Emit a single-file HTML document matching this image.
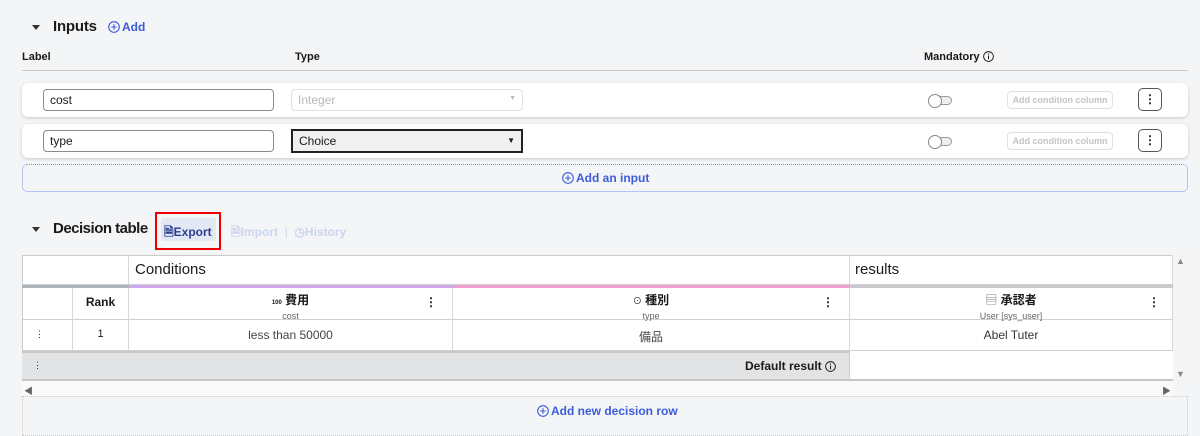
<!DOCTYPE html>
<html><head><meta charset="utf-8"><style>
*{box-sizing:border-box;margin:0;padding:0}
body{width:1200px;height:422px;background:#f4f5f7;font-family:"Liberation Sans","Noto Sans CJK JP",sans-serif;color:#1a1a1a;position:relative;overflow:hidden;font-size:12px}
.a{position:absolute}
.tri{width:0;height:0;border-left:4px solid transparent;border-right:4px solid transparent;border-top:5px solid #333}
.h{font-weight:bold;font-size:15px;letter-spacing:-0.2px}
.blue{color:#3b5bdb;font-weight:bold;font-size:12px;white-space:nowrap}
.card{background:#fff;border-radius:6px;box-shadow:0 1px 3px rgba(0,0,0,.18);left:22px;width:1166px;height:34px}
.inp{border:1px solid #8a8a8a;border-radius:4px;background:#fff;height:22px;padding:3px 6px;font-size:12px}
.sel{border:1px solid #e2e2e2;border-radius:4px;background:#fff;height:22px;padding:3px 6px;color:#b8b8b8;font-size:12px}
.tog{width:23px;height:9px;border:1px solid #999;border-radius:5px;background:#eee}
.tog::before{content:"";position:absolute;left:-2px;top:-3px;width:12px;height:12px;border:1px solid #888;border-radius:50%;background:#fff}
.acc{border:1px solid #e0e0e0;border-radius:4px;color:#c4c4c4;font-size:9px;font-weight:bold;text-align:center;line-height:16px;width:106px;height:18px}
.keb{width:24px;height:23px;border:1px solid #555;border-radius:5px;background:#fff;text-align:center;font-weight:bold;line-height:20px;font-size:12px}
svg.i{vertical-align:-2px;margin-right:2px}
.c{border-right:1px solid #d8d8d8;border-bottom:1px solid #d0d0d0}
</style></head><body>
<svg width="0" height="0" style="position:absolute"><defs>
<symbol id="plus" viewBox="0 0 12 12"><circle cx="6" cy="6" r="5.3" fill="none" stroke="currentColor" stroke-width="1.1"/><path d="M6 3.2v5.6M3.2 6h5.6" stroke="currentColor" stroke-width="1.1"/></symbol>
<symbol id="info" viewBox="0 0 12 12"><circle cx="6" cy="6" r="5.3" fill="none" stroke="currentColor" stroke-width="1"/><path d="M6 5v4" stroke="currentColor" stroke-width="1.1"/><circle cx="6" cy="3.3" r=".7" fill="currentColor"/></symbol>
</defs></svg>
<div class="a tri" style="left:32px;top:25px"></div>
<div class="a h" style="left:53px;top:18px">Inputs</div>
<div class="a blue" style="left:108px;top:20px"><svg class="i" width="12" height="12"><use href="#plus"/></svg>Add</div>
<div class="a" style="left:22px;top:51px;font-weight:bold;font-size:11px">Label</div>
<div class="a" style="left:295px;top:51px;font-weight:bold;font-size:11px">Type</div>
<div class="a" style="left:924px;top:51px;font-weight:bold;font-size:11px">Mandatory <svg class="i" width="11" height="11"><use href="#info"/></svg></div>
<div class="a" style="left:22px;top:70px;width:1166px;height:1px;background:#c8c8c8"></div>

<div class="a card" style="top:83px"></div>
<div class="a inp" style="left:43px;top:89px;width:231px">cost</div>
<div class="a sel" style="left:291px;top:89px;width:232px">Integer<span style="position:absolute;right:6px;top:5px;font-size:7px;color:#bbb">▼</span></div>
<div class="a tog" style="left:929px;top:96px"></div>
<div class="a acc" style="left:1007px;top:91px">Add condition column</div>
<div class="a keb" style="left:1138px;top:88px">⋮</div>

<div class="a card" style="top:124px"></div>
<div class="a inp" style="left:43px;top:130px;width:231px">type</div>
<div class="a" style="left:291px;top:129px;width:232px;height:24px;border:2px solid #222;background:#f0f0f0;padding:3px 6px;font-size:12px">Choice<span style="position:absolute;right:6px;top:5px;font-size:8px">▼</span></div>
<div class="a tog" style="left:929px;top:137px"></div>
<div class="a acc" style="left:1007px;top:132px">Add condition column</div>
<div class="a keb" style="left:1138px;top:129px">⋮</div>

<div class="a" style="left:22px;top:164px;width:1166px;height:28px;border:1px dotted #7b8ff0;border-radius:5px"></div>
<div class="a blue" style="left:562px;top:171px"><svg class="i" width="12" height="12"><use href="#plus"/></svg>Add an input</div>

<div class="a tri" style="left:32px;top:227px"></div>
<div class="a h" style="left:53px;top:220px;letter-spacing:-0.5px">Decision table</div>
<div class="a" style="left:155px;top:212px;width:66px;height:38px;border:2px solid #e00"></div>
<div class="a" style="left:161px;top:218px;width:55px;height:23px;background:#e3e8f5;border-radius:3px"></div>
<div class="a" style="left:164px;top:223px;font-weight:bold;color:#2a3f8f;font-size:12px">🗎Export</div>
<div class="a" style="left:231px;top:223px;font-weight:bold;color:#cdd5f0;font-size:12px">🗎Import &nbsp;<span style="font-weight:normal">|</span>&nbsp; ◷History</div>

<div class="a" style="left:22px;top:255px;width:1151px;height:126px;background:#fff;border-top:1px solid #ccc"></div>
<div class="a c" style="left:22px;top:255px;width:107px;height:30px;border-left:1px solid #ccc"></div>
<div class="a c" style="left:129px;top:255px;width:721px;height:30px;font-size:15px;padding:6px 6px">Conditions</div>
<div class="a c" style="left:850px;top:255px;width:323px;height:30px;font-size:15px;padding:6px 5px">results</div>
<div class="a" style="left:22px;top:285px;width:107px;height:3px;background:#aeb4b7"></div>
<div class="a" style="left:129px;top:285px;width:324px;height:3px;background:#d0a8ec"></div>
<div class="a" style="left:453px;top:285px;width:397px;height:3px;background:#ef9fd2"></div>
<div class="a" style="left:850px;top:285px;width:323px;height:3px;background:#c6cacc"></div>
<div class="a c" style="left:22px;top:288px;width:51px;height:32px;border-left:1px solid #ccc"></div>
<div class="a c" style="left:73px;top:288px;width:56px;height:32px;font-weight:bold;text-align:center;padding-top:7px">Rank</div>
<div class="a c" style="left:129px;top:288px;width:324px;height:32px;text-align:center;padding-top:3px"><b><span style="font-size:6px">100</span> 費用</b><br><span style="font-size:9px;color:#666">cost</span><span class="a" style="right:15px;top:7px;font-weight:bold">⋮</span></div>
<div class="a c" style="left:453px;top:288px;width:397px;height:32px;text-align:center;padding-top:3px"><b><span style="font-size:9px;font-weight:normal">⊙</span> 種別</b><br><span style="font-size:9px;color:#666">type</span><span class="a" style="right:15px;top:7px;font-weight:bold">⋮</span></div>
<div class="a c" style="left:850px;top:288px;width:323px;height:32px;text-align:center;padding-top:3px"><b><span style="font-weight:normal;color:#777">▤</span> 承認者</b><br><span style="font-size:9px;color:#666">User [sys_user]</span><span class="a" style="right:12px;top:7px;font-weight:bold">⋮</span></div>
<div class="a c" style="left:22px;top:320px;width:51px;height:31px;border-left:1px solid #ccc;padding:9px 12px;font-size:9px">⋮</div>
<div class="a c" style="left:73px;top:320px;width:56px;height:31px;text-align:center;padding-top:8px;font-size:11px">1</div>
<div class="a c" style="left:129px;top:320px;width:324px;height:31px;text-align:center;padding-top:8px;color:#444">less than 50000</div>
<div class="a c" style="left:453px;top:320px;width:397px;height:31px;text-align:center;padding-top:8px;color:#444">備品</div>
<div class="a c" style="left:850px;top:320px;width:323px;height:31px;text-align:center;padding-top:8px;color:#333">Abel Tuter</div>
<div class="a" style="left:22px;top:351px;width:828px;height:30px;background:#e1e3e5;border-top:2px solid #c8c8c8;border-bottom:2px solid #c8c8c8;border-right:1px solid #ccc"></div>
<div class="a" style="left:33px;top:360px;font-size:9px">⋮</div>
<div class="a" style="left:745px;top:359px;font-weight:bold;font-size:12px">Default result <svg class="i" width="11" height="11"><use href="#info"/></svg></div>
<div class="a" style="left:850px;top:379px;width:323px;height:2px;background:#c8c8c8"></div>
<div class="a" style="left:22px;top:381px;width:1151px;height:15px;background:#fafafa"></div>
<div class="a" style="left:24px;top:384px;font-size:9px;color:#666">◀</div>
<div class="a" style="left:1162px;top:384px;font-size:9px;color:#666">▶</div>
<div class="a" style="left:1173px;top:255px;width:15px;height:126px;background:#f4f4f4"></div>
<div class="a" style="left:1176px;top:256px;font-size:9px;color:#888">▲</div>
<div class="a" style="left:1176px;top:369px;font-size:9px;color:#888">▼</div>
<div class="a" style="left:22px;top:396px;width:1166px;height:40px;border:1px dotted #c8c8c8"></div>
<div class="a blue" style="left:537px;top:404px"><svg class="i" width="12" height="12"><use href="#plus"/></svg>Add new decision row</div>
</body></html>
